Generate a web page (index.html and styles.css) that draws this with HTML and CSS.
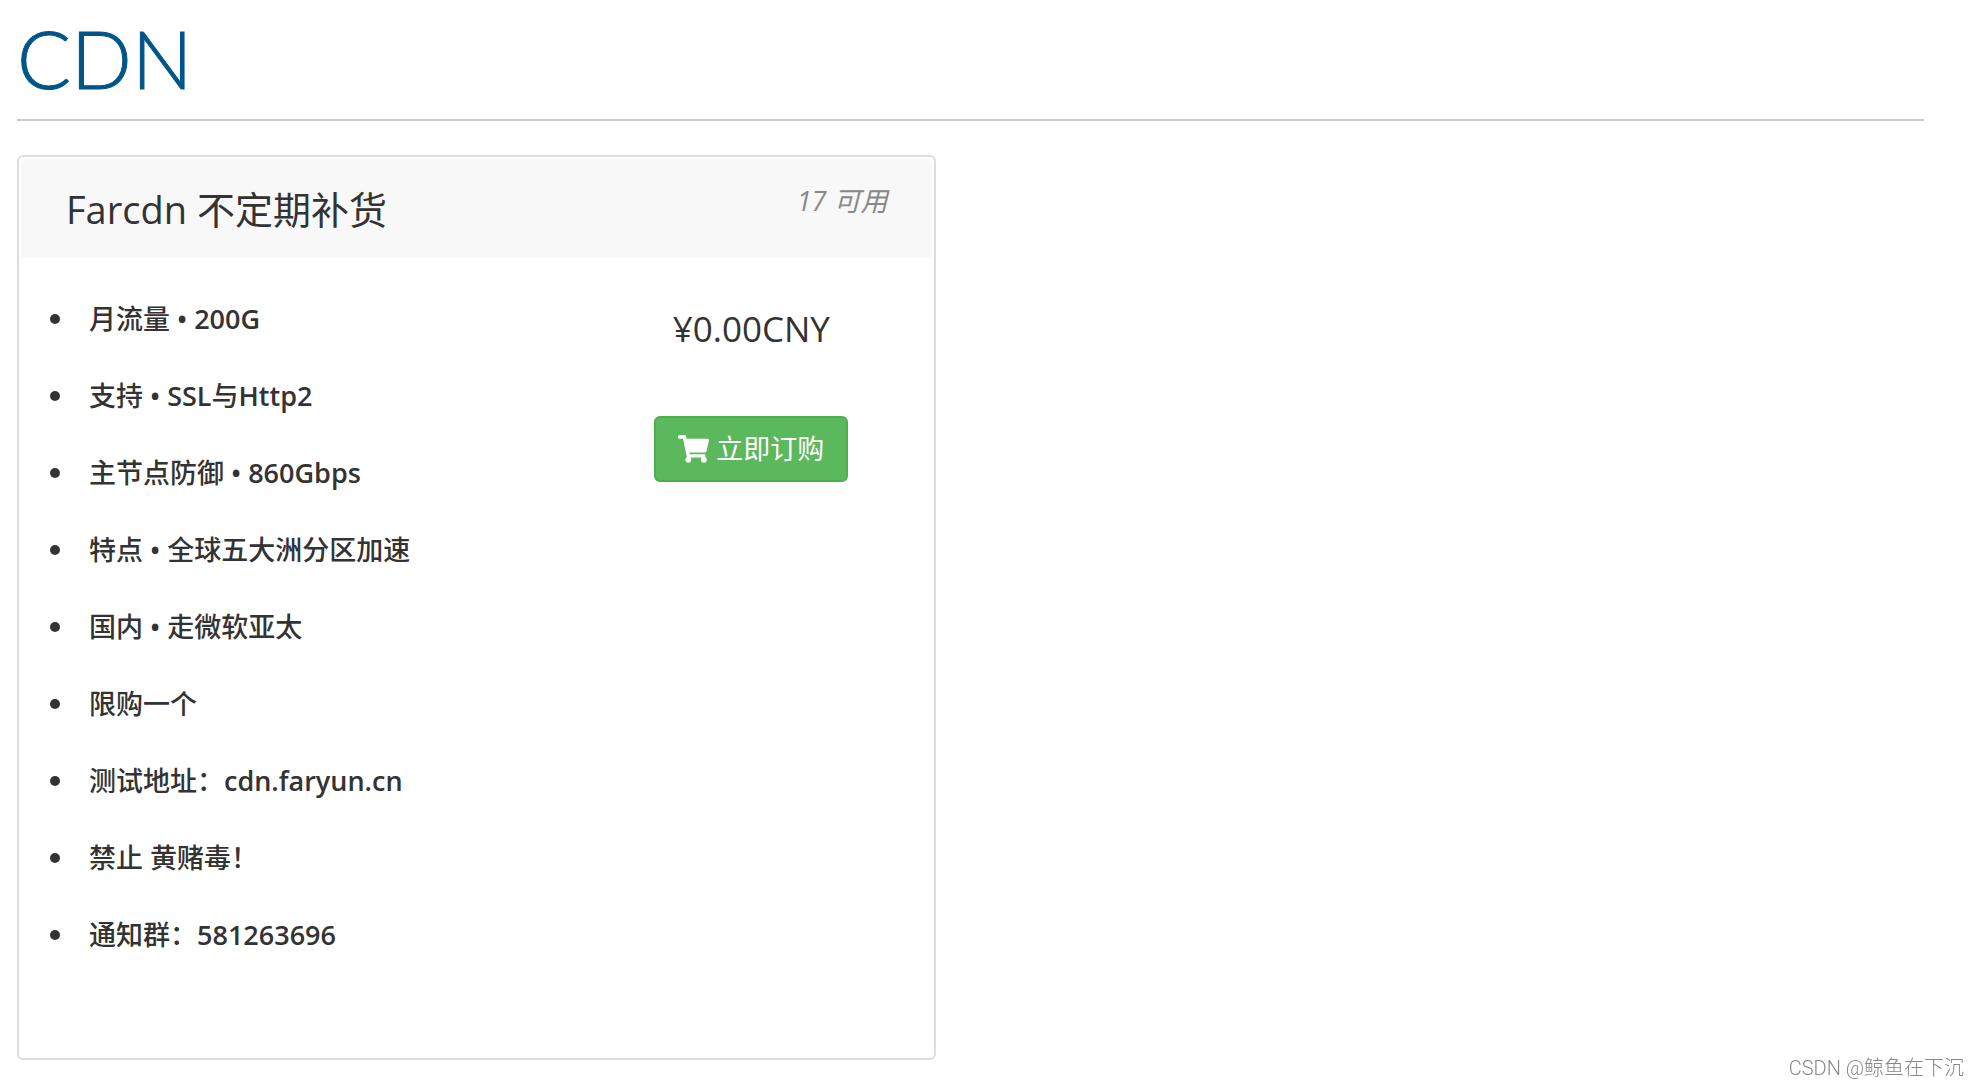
FILE: index.html
```html
<!DOCTYPE html>
<html lang="zh-CN">
<head>
    <meta charset="UTF-8">
    <meta name="viewport" content="width=device-width, initial-scale=1.0">
    <title>CDN</title>
    <link rel="stylesheet" href="styles.css">
</head>
<body>
    <main class="container">
        <h1>CDN</h1>

        <div class="products">
            <section class="product">
                <header class="product-header">
                    <h2>Farcdn 不定期补货</h2>
                    <em class="qty">17 可用</em>
                </header>
                <div class="product-body">
                    <ul class="features">
                        <li><span>月流量 <b>• 200G</b></span></li>
                        <li><span>支持 <b>• SSL</b>与<b>Http2</b></span></li>
                        <li><span>主节点防御 <b>• 860Gbps</b></span></li>
                        <li><span>特点 <b>•</b> 全球五大洲分区加速</span></li>
                        <li><span>国内 <b>•</b> 走微软亚太</span></li>
                        <li><span>限购一个</span></li>
                        <li><span>测试地址：<b>cdn.faryun.cn</b></span></li>
                        <li><span>禁止 黄赌毒！</span></li>
                        <li><span>通知群：<b>581263696</b></span></li>
                    </ul>
                    <div class="pricing">
                        <span class="price">¥0.00CNY</span>
                        <button class="order-button" type="button">
                            <svg class="cart" viewBox="0 0 576 512" aria-hidden="true">
                                <path d="M528.12 301.319l47.273-208C578.806 78.301 567.391 64 551.99 64H159.208l-9.166-44.81C147.758 8.021 137.93 0 126.529 0H24C10.745 0 0 10.745 0 24v16c0 13.255 10.745 24 24 24h69.883l70.248 343.435C147.325 417.1 136 435.222 136 456c0 30.928 25.072 56 56 56s56-25.072 56-56c0-15.674-6.447-29.835-16.824-40h209.647C430.447 426.165 424 440.326 424 456c0 30.928 25.072 56 56 56s56-25.072 56-56c0-22.172-12.888-41.332-31.579-50.405l5.517-24.276c3.413-15.018-8.002-29.319-23.403-29.319H218.117l-6.545-32h293.145c11.206 0 20.92-7.754 23.403-18.681z"/>
                            </svg>
                            立即订购
                        </button>
                    </div>
                </div>
            </section>
        </div>
    </main>

    <div class="watermark">CSDN @鲸鱼在下沉</div>
</body>
</html>
```

FILE: styles.css
```css
* {
    box-sizing: border-box;
}

body {
    margin: 0;
    background-color: #fff;
    color: #333;
    font-family: "Open Sans", "Noto Sans CJK SC", sans-serif;
    font-size: 27px;
}

.container {
    padding: 0 55px 27px 17px;
}

h1 {
    margin: 0 0 34px;
    padding: 10px 0 13px;
    border-bottom: 2px solid #ccc;
    color: #058;
    font-family: Lato, sans-serif;
    font-size: 80px;
    font-weight: 300;
    line-height: 96px;
    -webkit-text-stroke: 1px #058;
}

.products {
    display: grid;
    grid-template-columns: 1fr 1fr;
    gap: 70px;
}

.product {
    padding: 2px;
    border: 2px solid #ddd;
    border-radius: 6px;
}

.product-header {
    display: flex;
    justify-content: space-between;
    align-items: flex-start;
    padding: 24px 44px 23px 45px;
    border-radius: 6px 6px 0 0;
    background-color: #f8f8f8;
}

h2 {
    margin: 0;
    font-size: 38px;
    font-weight: 400;
    line-height: 52px;
}

.qty {
    color: #888;
    line-height: 36px;
}

.product-body {
    display: grid;
    grid-template-columns: 5fr 3fr;
    padding: 22px 14px 83px 10px;
}

.features {
    margin: 0;
    padding-left: 19px;
    font-weight: 500;
    line-height: 77px;
    list-style: none;
}

.features li {
    display: flex;
    align-items: center;
    gap: 29px;
}

.features li::before {
    content: "";
    width: 10px;
    height: 10px;
    border-radius: 50%;
    background-color: #333;
}

.features b {
    font-weight: 600;
}

.pricing {
    display: flex;
    flex-direction: column;
    align-items: center;
    padding-top: 25px;
}

.price {
    margin-bottom: 63px;
    font-size: 35px;
    line-height: 48px;
}

.order-button {
    display: flex;
    align-items: center;
    gap: 7px;
    padding: 12px 22px;
    border: 2px solid #4cae4c;
    border-radius: 6px;
    background-color: #5cb85c;
    color: #fff;
    font: inherit;
    line-height: 38px;
    cursor: pointer;
}

.order-button:hover {
    background-color: #449d44;
}

.cart {
    width: 31px;
    height: 28px;
    fill: #fff;
}

.watermark {
    position: fixed;
    right: 15px;
    bottom: 3px;
    color: #888;
    font-family: Roboto, "Noto Sans CJK SC", sans-serif;
    font-size: 20px;
    font-weight: 300;
    line-height: 28px;
}
```
